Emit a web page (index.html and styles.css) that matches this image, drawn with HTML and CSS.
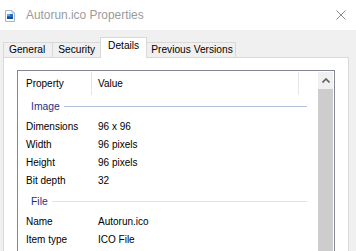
FILE: index.html
```html
<!DOCTYPE html>
<html lang="en">
<head>
    <meta charset="utf-8">
    <title>Autorun.ico Properties</title>
    <link rel="stylesheet" href="styles.css">
</head>
<body>
    <div class="window">
        <div class="titlebar">
            <svg class="file-icon" width="10" height="12" viewBox="0 0 10 12">
                <path d="M0.5 0.5 H7 L9.5 3 V11.5 H0.5 Z" fill="#fff" stroke="#a8b4c4"/>
                <path d="M7 0.5 V3 H9.5" fill="#e4e9f0" stroke="#a8b4c4"/>
                <rect x="2" y="4" width="6" height="5" fill="#1f6fc8"/>
                <rect x="2" y="4" width="3" height="2" fill="#5aa8ee"/>
                <rect x="2" y="7" width="6" height="2" fill="#124c98"/>
            </svg>
            <span class="title">Autorun.ico Properties</span>
            <svg class="close" width="10" height="10" viewBox="0 0 10 10">
                <path d="M0.5 0.5 L9.5 9.5 M9.5 0.5 L0.5 9.5" stroke="#8a8a8a" stroke-width="1"/>
            </svg>
        </div>

        <div class="dialog">
            <div class="tabs">
                <div class="tab first">General</div>
                <div class="tab">Security</div>
                <div class="tab active">Details</div>
                <div class="tab last">Previous Versions</div>
            </div>

            <div class="panel">
                <div class="listview">
                    <div class="list-main">
                        <div class="list-header">
                            <div class="col-name">Property</div>
                            <div class="col-value">Value</div>
                        </div>

                        <div class="group focused"><span>Image</span><i></i></div>
                        <div class="row"><span class="key">Dimensions</span><span>96 x 96</span></div>
                        <div class="row"><span class="key">Width</span><span>96 pixels</span></div>
                        <div class="row"><span class="key">Height</span><span>96 pixels</span></div>
                        <div class="row"><span class="key">Bit depth</span><span>32</span></div>

                        <div class="group"><span>File</span><i></i></div>
                        <div class="row"><span class="key">Name</span><span>Autorun.ico</span></div>
                        <div class="row"><span class="key">Item type</span><span>ICO File</span></div>
                    </div>

                    <div class="scrollbar">
                        <div class="scroll-up">
                            <svg width="8" height="5" viewBox="0 0 8 5">
                                <path d="M0.5 4.5 L4 1 L7.5 4.5" fill="none" stroke="#606060" stroke-width="1.6"/>
                            </svg>
                        </div>
                        <div class="scroll-thumb"></div>
                    </div>
                </div>
            </div>
        </div>
    </div>
</body>
</html>
```

FILE: styles.css
```css
body {
    margin: 0;
    font-family: "Liberation Sans", Arial, sans-serif;
    background: #f0f0f0;
    color: #000;
}

.window {
    width: 356px;
    height: 251px;
    overflow: hidden;
    background: #f0f0f0;
}

/* Title bar */
.titlebar {
    height: 30px;
    background: #fff;
    display: flex;
    align-items: center;
    padding-left: 5px;
}

.file-icon {
    margin-top: 1px;
}

.title {
    margin-left: 11px;
    font-size: 11.9px;
    color: #9a9a9a;
}

.close {
    margin-left: auto;
    margin-right: 10px;
}

/* Dialog body */
.dialog {
    padding: 7px 7px 0 3px;
}

.tabs {
    display: flex;
    align-items: flex-end;
    height: 20px;
    font-size: 10.2px;
}

.tab {
    height: 15px;
    line-height: 14px;
    padding: 0 5px;
    border: 1px solid #d9d9d9;
    border-bottom: none;
    border-right: none;
    box-sizing: border-box;
    background: #f0f0f0;
}

.tab.first {
    padding-right: 7px;
}

.tab.last {
    padding: 0 2px 0 4px;
    border-right: 1px solid #d9d9d9;
}

.tab.active {
    height: 21px;
    line-height: 16px;
    margin: 0 0 -1px 0;
    padding: 0 7px;
    background: #fff;
    border-right: 1px solid #d9d9d9;
    position: relative;
    z-index: 1;
}

.tab.active + .tab {
    border-left: none;
}

.panel {
    border: 1px solid #d9d9d9;
    background: #fff;
    padding: 12px 13px 0 13px;
    height: 200px;
}

/* List view */
.listview {
    border: 1px solid #828790;
    display: flex;
    height: 200px;
    font-size: 10px;
}

.list-main {
    flex: 1;
}

.list-header {
    display: flex;
    height: 25px;
}

.col-name,
.col-value {
    display: flex;
    align-items: center;
    box-sizing: border-box;
    border-right: 1px solid #e5e5e5;
    margin: 1px 0;
}

.col-name {
    width: 74px;
    padding-left: 8px;
}

.col-value {
    width: 207px;
    padding-left: 6px;
}

.group {
    display: flex;
    align-items: center;
    height: 21px;
    margin-top: 2px;
    padding: 0 11px 0 13px;
    color: #1e3287;
    font-size: 10.4px;
}

.list-header + .group {
    margin-top: 0;
}

.group i {
    flex: 1;
    height: 1px;
    margin-left: 4px;
    background: #dde2ef;
}

.group.focused i {
    background: #b6bfdb;
}

.row {
    display: flex;
    align-items: center;
    height: 18px;
    padding-left: 8px;
}

.key {
    width: 72px;
}

/* Scrollbar */
.scrollbar {
    width: 15px;
    margin: 1px 1px 0 0;
    display: flex;
    flex-direction: column;
}

.scroll-up {
    height: 17px;
    background: #f0f0f0;
    display: flex;
    align-items: center;
    justify-content: center;
}

.scroll-thumb {
    flex: 1;
    background: #cdcdcd;
}
```
